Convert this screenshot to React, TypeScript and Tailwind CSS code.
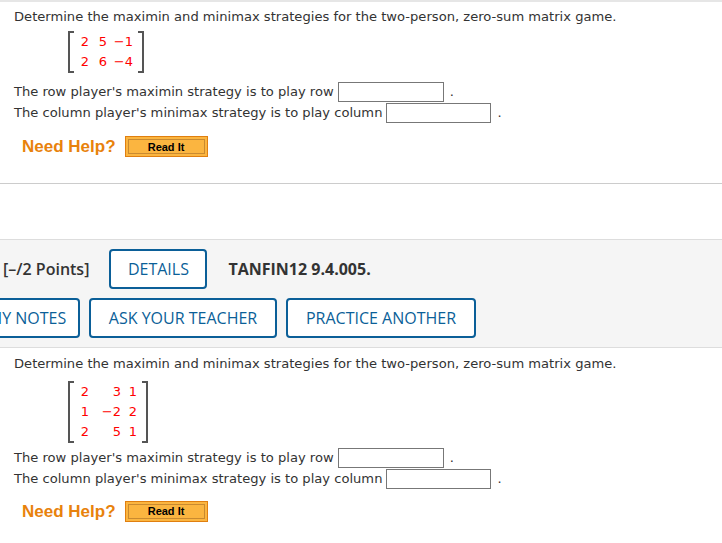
import React from 'react';

const verdana = { fontFamily: '"DejaVu Sans", Verdana, sans-serif' };
const openSans = { fontFamily: '"Open Sans", sans-serif' };

const Matrix: React.FC<{ rows: string[][]; colWidths: string[] }> = ({ rows, colWidths }) => (
  <div className="ml-[68px] flex items-stretch">
    <div className="w-[6px] border-l-2 border-t-2 border-b-2 border-[#555]" />
    <div className="px-[5px] py-[1px]">
      {rows.map((row, i) => (
        <div key={i} className="flex h-[20px] items-center text-[13px] text-[#ff0000]" style={verdana}>
          {row.map((cell, j) => (
            <span key={j} className={`${colWidths[j]} text-right`}>
              {cell}
            </span>
          ))}
        </div>
      ))}
    </div>
    <div className="w-[6px] border-r-2 border-t-2 border-b-2 border-[#555]" />
  </div>
);

const Question: React.FC<{
  rows: string[][];
  colWidths: string[];
  matrixGap: string;
  answerGap: string;
  helpGap: string;
}> = ({ rows, colWidths, matrixGap, answerGap, helpGap }) => (
  <div className="pl-[14px] text-[13.1px] text-[#333]" style={verdana}>
    <p className="leading-[20px]">Determine the maximin and minimax strategies for the two-person, zero-sum matrix game.</p>
    <div className={`${matrixGap} -ml-[14px]`}>
      <Matrix rows={rows} colWidths={colWidths} />
    </div>
    <div className={`${answerGap} flex h-[21px] items-center`}>
      <span>The row player's maximin strategy is to play row</span>
      <input className="ml-[4px] h-[20px] w-[106px] border border-[#777] bg-white" />
      <span className="ml-[6px]">.</span>
    </div>
    <div className="flex h-[21px] items-center">
      <span>The column player's minimax strategy is to play column</span>
      <input className="ml-[4px] h-[20px] w-[105px] border border-[#777] bg-white" />
      <span className="ml-[6px]">.</span>
    </div>
    <div className={`${helpGap} flex items-center pl-[8px]`}>
      <span className="text-[17px] font-bold text-[#e8820c]" style={{ fontFamily: '"Liberation Sans", Arial, sans-serif' }}>
        Need Help?
      </span>
      <button
        className="ml-[9px] h-[21px] w-[83px] border border-[#e07f10] bg-[#fbb540] p-[2px]"
        style={{ fontFamily: '"Liberation Sans", Arial, sans-serif' }}
      >
        <span className="flex h-full w-full items-center justify-center border border-[#c98a30] text-[11px] font-bold text-black">
          Read It
        </span>
      </button>
    </div>
  </div>
);

const OutlineButton: React.FC<{ children: React.ReactNode; className?: string }> = ({ children, className }) => (
  <button
    className={`h-[40px] rounded-[4px] border-2 border-[#0b5f98] bg-white text-[16px] text-[#0b5f98] ${className ?? ''}`}
    style={openSans}
  >
    {children}
  </button>
);

export default function App() {
  return (
    <div className="min-h-[543px] w-[722px] overflow-hidden bg-white">
      <div className="border-t-2 border-[#e6e6e6] pt-[5px]">
        <Question
          rows={[
            ['2', '5', '\u22121'],
            ['2', '6', '\u22124'],
          ]}
          colWidths={['w-[10px]', 'w-[18px]', 'w-[26px]']}
          matrixGap="mt-[4px]"
          answerGap="mt-[8px]"
          helpGap="mt-[11px]"
        />
      </div>

      <div className="mt-[23px] h-[56px] border-t border-[#cccccc]" />

      <div className="border-t border-b border-[#dddddd] bg-[#f5f5f5] py-[9px]">
        <div className="flex items-center" style={openSans}>
          <span className="pl-[3px] text-[16px] font-semibold text-[#333]">[–/2 Points]</span>
          <OutlineButton className="ml-[20px] w-[98px]">DETAILS</OutlineButton>
          <span className="ml-[21px] text-[16px] font-bold text-[#333]">TANFIN12 9.4.005.</span>
        </div>
        <div className="mt-[9px] flex items-center gap-[9px]">
          <OutlineButton className="-ml-[26px] w-[106px]">MY NOTES</OutlineButton>
          <OutlineButton className="w-[188px]">ASK YOUR TEACHER</OutlineButton>
          <OutlineButton className="w-[190px]">PRACTICE ANOTHER</OutlineButton>
        </div>
      </div>

      <div className="pt-[6px]">
        <Question
          rows={[
            ['2', '3', '1'],
            ['1', '\u22122', '2'],
            ['2', '5', '1'],
          ]}
          colWidths={['w-[10px]', 'w-[32px]', 'w-[16px]']}
          matrixGap="mt-[7px]"
          answerGap="mt-[5px]"
          helpGap="mt-[9px]"
        />
      </div>
    </div>
  );
}
